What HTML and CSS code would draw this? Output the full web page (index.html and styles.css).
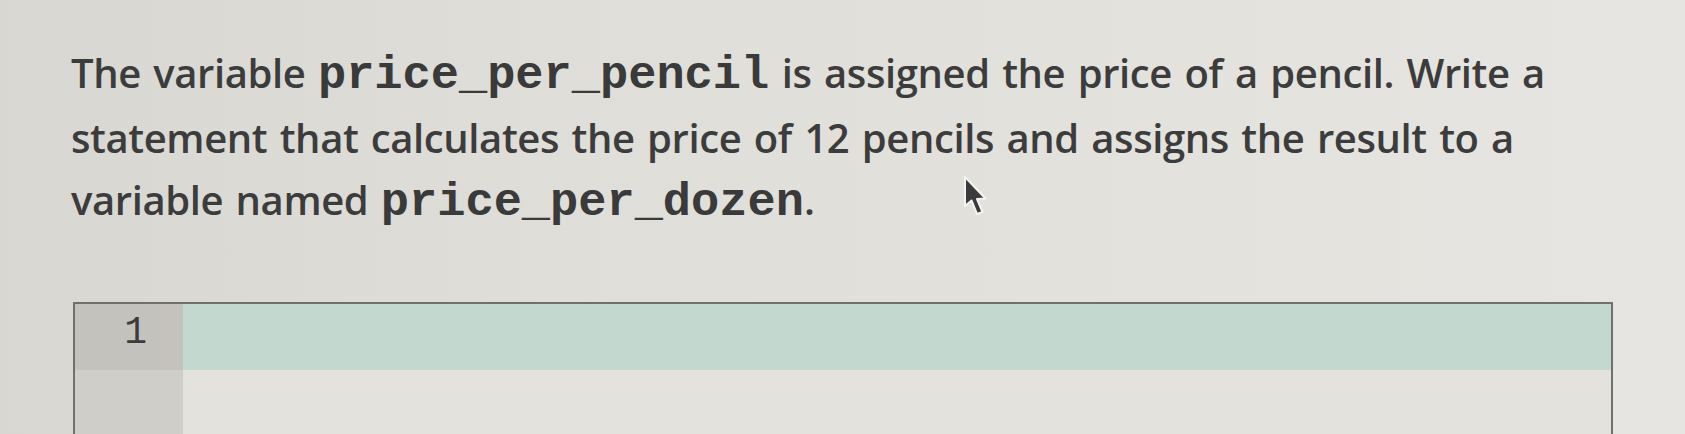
FILE: index.html
```html
<!DOCTYPE html>
<html>
<head>
<meta charset="utf-8">
<link rel="stylesheet" href="styles.css">
</head>
<body>
<div class="page">
  <p class="prompt">The variable <code class="mono">price_per_pencil</code> is assigned the price of a pencil. Write a statement that calculates the price of 12 pencils and assigns the result to a variable named <code class="mono">price_per_dozen</code>.</p>
  <div class="editor">
    <div class="row active">
      <div class="gutter">1</div>
      <div class="code"></div>
    </div>
    <div class="row">
      <div class="gutter"></div>
      <div class="code"></div>
    </div>
  </div>
  <svg class="cursor" width="26" height="46" viewBox="0 0 26 46">
    <path d="M3 2 L3 31 L9.5 25.5 L15 39 L20.5 37 L15 24 L23.5 23.5 Z" fill="#3b3b3b" stroke="#f4f4f2" stroke-width="2" stroke-linejoin="round"/>
  </svg>
</div>
</body>
</html>
```

FILE: styles.css
```css
html, body {
  margin: 0;
  padding: 0;
}
body {
  width: 1685px;
  height: 434px;
  overflow: hidden;
  background: linear-gradient(90deg, #d8d7d1 0%, #dfded9 35%, #e3e2dd 70%, #e6e5e1 100%);
}
.page {
  position: relative;
  padding: 42px 0 0 71px;
}
.prompt {
  margin: 0;
  width: 1580px;
  font-family: "Open Sans", "Noto Sans", sans-serif;
  font-size: 40px;
  font-weight: 600;
  line-height: 62px;
  color: #3c3c3c;
  letter-spacing: -0.4px;
  word-spacing: 2.5px;
}
.mono {
  font-family: "Liberation Mono", "Courier New", monospace;
  font-size: 47px;
  line-height: 62px;
  font-weight: bold;
  color: #3a3a3a;
  letter-spacing: 0;
  word-spacing: 0;
}
.editor {
  margin-top: 68px;
  margin-left: 2px;
  width: 1536px;
  height: 200px;
  border: 2px solid #6f716f;
  border-bottom: none;
  display: flex;
  flex-direction: column;
  background: #e3e2dd;
}
.row {
  display: flex;
}
.row.active {
  height: 66px;
}
.row:not(.active) {
  flex: 1;
}
.gutter {
  width: 108px;
  flex: none;
  background: #d0cec8;
  font-family: "Liberation Mono", "Courier New", monospace;
  font-size: 38px;
  line-height: 58px;
  color: #3c3c3c;
  text-align: right;
  padding-right: 36px;
  box-sizing: border-box;
}
.row.active .gutter {
  background: #c4c2bc;
}
.code {
  flex: 1;
}
.row.active .code {
  background: #c3d8ce;
}
.cursor {
  position: absolute;
  left: 962px;
  top: 175px;
}
```
